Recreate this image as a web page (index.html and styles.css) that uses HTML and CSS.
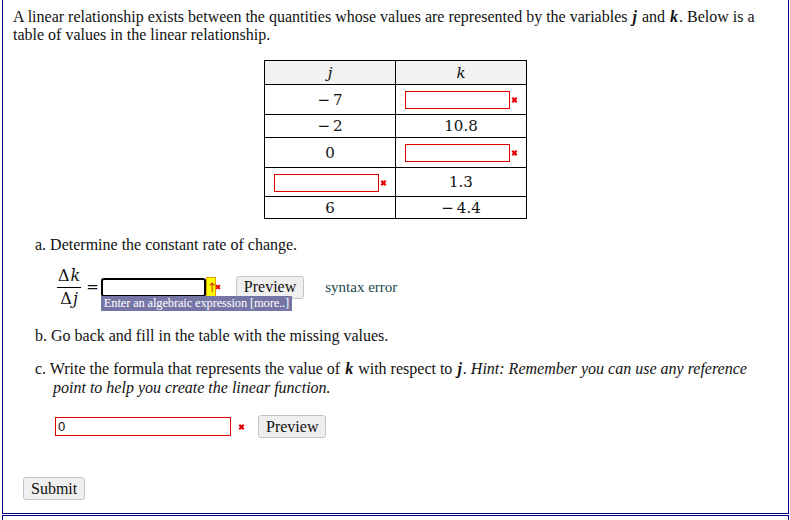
FILE: index.html
```html
<!DOCTYPE html>
<html>
<head>
<meta charset="utf-8">
<link rel="stylesheet" href="styles.css">
</head>
<body>
<div class="problem">
  <p class="intro">A linear relationship exists between the quantities whose values are represented by the variables <i class="mv">j</i> and <i class="mv">k</i>. Below is a table of values in the linear relationship.</p>
  <table class="vals">
    <tr class="head"><th><i class="mv">j</i></th><th><i class="mv">k</i></th></tr>
    <tr class="tall"><td>−&#8201;7</td><td><span class="cellans"><span class="ansbox"></span><svg class="xmark" viewBox="0 0 8 8"><path d="M1.5 1.5L6.5 6.5M6.5 1.5L1.5 6.5"/></svg></span></td></tr>
    <tr class="short"><td>−&#8201;2</td><td>10.8</td></tr>
    <tr class="tall"><td>0</td><td><span class="cellans"><span class="ansbox"></span><svg class="xmark" viewBox="0 0 8 8"><path d="M1.5 1.5L6.5 6.5M6.5 1.5L1.5 6.5"/></svg></span></td></tr>
    <tr class="tall2"><td><span class="cellans"><span class="ansbox"></span><svg class="xmark" viewBox="0 0 8 8"><path d="M1.5 1.5L6.5 6.5M6.5 1.5L1.5 6.5"/></svg></span></td><td>1.3</td></tr>
    <tr class="last"><td>6</td><td>−&#8201;4.4</td></tr>
  </table>
  <p class="qa">a. Determine the constant rate of change.</p>
  <div class="ratio-row">
    <span class="frac"><span class="num">Δ<i class="mv">k</i></span><span class="den">Δ<i class="mv">j</i></span></span>
    <span class="eq">=</span>
    <span class="mq-wrap">
      <span class="mq-box"></span>
      <span class="arrow">↑</span>
      <svg class="xmark xm-a" viewBox="0 0 8 8"><path d="M1.5 1.5L6.5 6.5M6.5 1.5L1.5 6.5"/></svg>
      <span class="tip">Enter an algebraic expression [more..]</span>
    </span>
    <button class="btn prev-a">Preview</button>
    <span class="syntax">syntax error</span>
  </div>
  <p class="qb">b. Go back and fill in the table with the missing values.</p>
  <p class="qc">c. Write the formula that represents the value of <i class="mv">k</i> with respect to <i class="mv">j</i>. <i class="hint">Hint: Remember you can use any reference point to help you create the linear function.</i></p>
  <div class="formula-row">
    <span class="fbox">0</span>
    <svg class="xmark xm-c" viewBox="0 0 8 8"><path d="M1.5 1.5L6.5 6.5M6.5 1.5L1.5 6.5"/></svg>
    <button class="btn prev-c">Preview</button>
  </div>
  <div class="submit-row"><button class="btn submit">Submit</button></div>
</div>
<div class="next"></div>
</body>
</html>
```
FILE: styles.css
```css
html, body {
  margin: 0;
  padding: 0;
  background: #fff;
}
body {
  font-family: "Liberation Serif", "Times New Roman", serif;
  font-size: 16px;
  color: #111;
  overflow: hidden;
  height: 520px;
}
.problem {
  margin-left: 2px;
  width: 785px;
  border: 1px solid #000080;
  border-top: none;
  padding: 8px 0 12px 0;
  height: 493px;
}
.mv {
  font-family: "Liberation Serif", serif;
  font-style: italic;
  font-size: 16px;
  font-weight: bold;
  padding: 0 1px 0 1px;
}
.intro {
  margin: 0 0 0 10px;
  padding-right: 28px;
}
.vals {
  border-collapse: collapse;
  margin: 16px auto 0 auto;
  font-family: "DejaVu Serif", serif;
  font-size: 15px;
}
.vals .mv {
  font-family: "DejaVu Serif", serif;
  font-size: 15px;
  font-weight: normal;
}
.vals th, .vals td {
  border: 1px solid #000;
  width: 130px;
  text-align: center;
  padding: 0;
}
.vals th {
  background: #f2f2f2;
  height: 23px;
  font-weight: normal;
}
.vals tr.tall td { height: 29px; }
.vals tr.short td { height: 22px; }
.vals tr.tall2 td { height: 28px; }
.vals tr.last td { height: 21px; }
.cellans {
  display: inline-flex;
  align-items: center;
  gap: 1px;
  vertical-align: middle;
}
.ansbox {
  display: inline-block;
  width: 103px;
  height: 16px;
  border: 1px solid #e00000;
  background: #fff;
}
.xmark {
  width: 7px;
  height: 8px;
  display: inline-block;
}
.xmark path {
  stroke: #e00000;
  stroke-width: 2.6;
  fill: none;
}
.qa {
  margin: 17px 0 0 32px;
}
.ratio-row {
  display: flex;
  align-items: center;
  margin: 11px 0 0 53px;
  height: 44px;
}
.frac {
  display: inline-flex;
  flex-direction: column;
  align-items: center;
  font-family: "DejaVu Serif", serif;
  font-size: 16px;
  padding: 0 1px;
}
.frac .mv {
  font-family: "DejaVu Serif", serif;
  font-weight: normal;
  font-size: 16px;
  padding: 0 0 0 1px;
}
.frac .num {
  border-bottom: 1px solid #000;
  padding: 0 1px 1px 1px;
  line-height: 21px;
}
.frac .den {
  line-height: 21px;
}
.eq {
  font-family: "DejaVu Serif", serif;
  font-size: 15px;
  margin: 0 2px 0 4px;
}
.mq-wrap {
  position: relative;
  display: inline-flex;
  align-items: center;
}
.mq-box {
  display: inline-block;
  width: 101px;
  height: 15px;
  border: 2px solid #000;
  border-radius: 3px;
}
.arrow {
  display: inline-block;
  width: 8px;
  height: 19px;
  background: #ffff00;
  border: 1px solid #e8a000;
  color: #d04000;
  font-size: 13px;
  line-height: 19px;
  text-align: center;
  font-family: "DejaVu Sans", sans-serif;
}
.xm-a {
  margin-left: -1px;
  width: 6px;
}
.tip {
  position: absolute;
  left: 0;
  top: 19px;
  background: #7676a6;
  color: #fff;
  font-size: 12.5px;
  line-height: 15px;
  padding: 0 3px 0 3px;
  white-space: nowrap;
  letter-spacing: -0.15px;
}
.btn {
  font-family: "Liberation Serif", serif;
  font-size: 16px;
  color: #111;
  background: #efefef;
  border: 1px solid #c4c4c4;
  border-radius: 3px;
  padding: 0 7px;
  height: 23px;
  line-height: 20px;
}
.prev-a {
  margin: 0 0 0 15px;
}
.syntax {
  color: #1d4747;
  font-size: 15px;
  margin: 0 0 0 21px;
}
.qb {
  margin: 18px 0 0 32px;
}
.qc {
  margin: 14px 0 0 32px;
  padding-left: 18px;
  text-indent: -18px;
  padding-right: 30px;
  line-height: 19px;
}
.hint {
  font-style: italic;
}
.formula-row {
  display: flex;
  align-items: center;
  margin: 18px 0 0 52px;
}
.fbox {
  display: inline-block;
  width: 172px;
  height: 17px;
  border: 1px solid #e00000;
  font-family: "Liberation Sans", sans-serif;
  font-size: 13px;
  line-height: 17px;
  padding-left: 2px;
}
.xm-c {
  margin-left: 7px;
}
.prev-c {
  margin-left: 13px;
}
.submit-row {
  margin: 39px 0 0 20px;
}
.next {
  margin-left: 2px;
  width: 785px;
  border: 1px solid #000080;
  border-bottom: none;
  margin-top: 1px;
  height: 20px;
}
```
